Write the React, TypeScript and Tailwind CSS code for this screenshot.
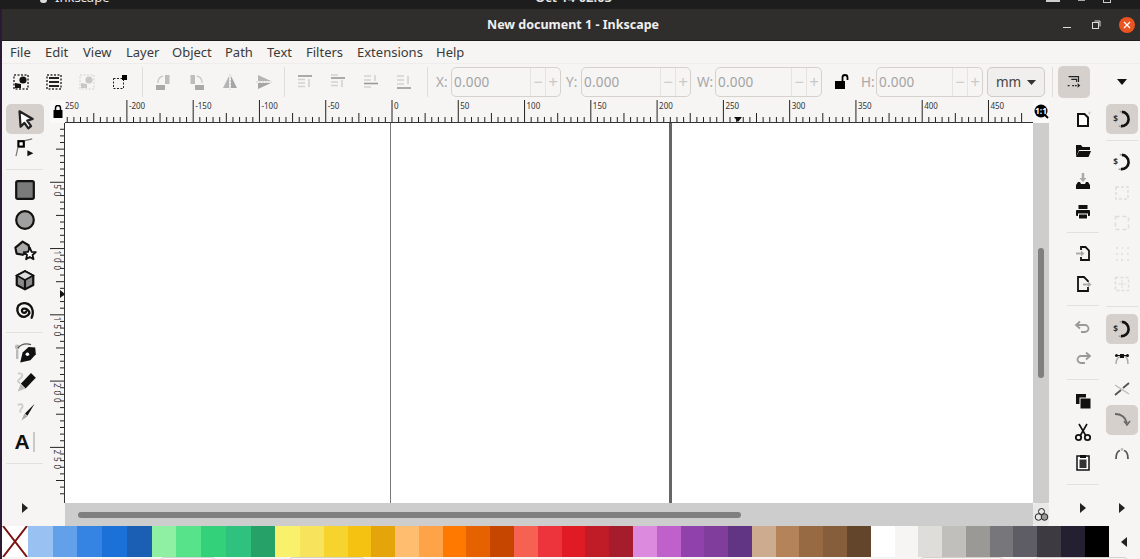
import React from "react";

type P = { children: React.ReactNode; s?: number; c?: string };
const Ic = ({ children, s = 20, c = "" }: P) => (
  <svg width={s} height={s} viewBox="0 0 20 20" className={c} fill="none">{children}</svg>
);
const D = "#111";

const Dash = ({ x = 3, y = 3, w = 14, h = 14, col = "#333" }: any) => (
  <rect x={x} y={y} width={w} height={h} stroke={col} strokeWidth="1.5" strokeDasharray="2 1.5" fill="none" />
);

const tbIcons: Record<string, React.ReactNode> = {
  all: (<><Dash /><circle cx="12" cy="8" r="3.6" fill={D} /><path d="M4 16v-5l6 1v4z" fill={D} /></>),
  layers: (<><Dash /><path d="M5 6h10M5 10h10M5 14h10" stroke="#222" strokeWidth="2.2" /></>),
  dsel: (<><Dash col="#ddd" /><circle cx="12" cy="8" r="3.6" fill="#c8c8c8" /><path d="M4 16v-5l6 1v4z" fill="#c8c8c8" /></>),
  touch: (<><rect x="3.5" y="6.5" width="10" height="10" stroke="#222" strokeDasharray="2 1.5" /><rect x="12" y="3" width="5" height="5" fill="#000" /></>),
  rotl: (<><rect x="3" y="13" width="9" height="5" fill="#a9a9a9" /><rect x="12" y="3" width="4.5" height="9" fill="#bdbdbd" /><path d="M10 4Q5 5 5 11" stroke="#ccc" strokeWidth="1.5" /></>),
  rotr: (<><rect x="8" y="13" width="9" height="5" fill="#a9a9a9" /><rect x="3.5" y="3" width="4.5" height="9" fill="#bdbdbd" /><path d="M10 4Q15 5 15 11" stroke="#ccc" strokeWidth="1.5" /></>),
  flipx: (<><path d="M9 4v12H3z" fill="#b5b5b5" /><path d="M11 4v12h6z" fill="#a5a5a5" /><path d="M10 2v16" stroke="#ccc" strokeDasharray="2 1" /></>),
  flipy: (<><path d="M4 9h13L4 3z" fill="#b5b5b5" /><path d="M4 11h13L4 17z" fill="#a5a5a5" /><path d="M2 10h16" stroke="#ccc" strokeDasharray="2 1" /></>),
  a1: (<><path d="M3 4h14" stroke="#999" strokeWidth="1.6" /><path d="M3 7.5h7M3 11h7M3 14.500h7M14 15V7" stroke="#d2d2d2" strokeWidth="1.6" /></>),
  a2: (<><path d="M3 6h14" stroke="#999" strokeWidth="1.6" /><path d="M3 3h7M3 10h7M3 13.500h7M14 15V8" stroke="#d2d2d2" strokeWidth="1.6" /></>),
  a3: (<><path d="M3 11.500h14" stroke="#999" strokeWidth="1.6" /><path d="M3 4h7M3 8h7M3 15h7M14 9V3" stroke="#d2d2d2" strokeWidth="1.6" /></>),
  a4: (<><path d="M3 16h14" stroke="#999" strokeWidth="1.6" /><path d="M3 4h7M3 8h7M3 12h7M14 12V4" stroke="#d2d2d2" strokeWidth="1.6" /></>),
};

const Sp = ({ x }: { x: string }) => <div className={`${x} h-[30px] w-px bg-[#e0dedb] shrink-0`} />;

const Tb = ({ k, w = "w-[33px]" }: { k: string; w?: string }) => (
  <div className={`${w} h-[36px] flex items-center justify-center shrink-0`}>
    <Ic>{tbIcons[k]}</Ic>
  </div>
);

const Spin = ({ w }: { w: string }) => (
  <div className={`${w} h-[30px] rounded-[5px] border border-[#d5d1cd] flex items-center shrink-0 text-[13.5px] text-[#a3a3a3]`}>
    <span className="pl-[2px] flex-1 tracking-[0.2px]">0.000</span>
    <span className="w-[15px] h-full border-l border-[#e6e4e1] flex items-center justify-center text-[#c9c9c9] text-[17px]">−</span>
    <span className="w-[15px] h-full border-l border-[#e6e4e1] flex items-center justify-center text-[#c9c9c9] text-[17px]">+</span>
  </div>
);

const Label = ({ t, w }: { t: string; w: string }) => (
  <span className={`${w} text-[13.5px] text-[#a8a8a8] shrink-0`}>{t}</span>
);

const HRuler = () => {
  const O = 327;
  const U = 1.3255;
  const els: React.ReactNode[] = [];
  for (let v = -250; v <= 475; v += 5) {
    const x = O + v * U;
    if (x < 0 || x > 969) continue;
    const h = v % 50 === 0 ? 22 : v % 25 === 0 ? 9 : 5;
    els.push(<line key={v} x1={x} x2={x} y1={22 - h} y2={22} stroke="#222" strokeWidth="1" />);
    if (v % 50 === 0) {
      els.push(<text key={"t" + v} x={x + 2} y={8.500} fontSize="8" fill="#333" fontFamily="'Noto Sans',sans-serif">{v}</text>);
    }
  }
  els.push(<text key="m250" x={0} y={8.500} fontSize="8" fill="#333" fontFamily="'Noto Sans',sans-serif">250</text>);
  return (
    <svg width="969" height="23" className="block flex-1 min-w-0">
      {els}
      <line x1="0" x2="969" y1="22.500" y2="22.500" stroke="#333" />
      <path d="M669 17h8l-4 5z" fill="#111" />
    </svg>
  );
};

const VRuler = () => {
  const O = -7;
  const U = 1.3255;
  const els: React.ReactNode[] = [];
  for (let v = -5; v <= 285; v += 5) {
    const y = O + v * U;
    if (y < 0 || y > 380) continue;
    const w = v % 50 === 0 ? 15 : v % 25 === 0 ? 9 : 5;
    els.push(<line key={v} y1={y} y2={y} x1={15 - w} x2={15} stroke="#222" />);
    if (v % 50 === 0 && v > 0) {
      String(v).split("").forEach((d, i) => {
        const ty = y + 2 + i * 7.5;
        els.push(
          <text key={`t${v}${i}`} x={0} y={0} transform={`translate(3.5 ${ty}) rotate(90)`} fontSize="8" fill="#333" fontFamily="'Noto Sans',sans-serif">{d}</text>
        );
      });
    }
  }
  return (
    <svg width="15" height="380" className="block shrink-0">
      {els}
      <line x1="14.500" x2="14.500" y1="0" y2="380" stroke="#333" />
      <path d="M10 167l5 4-5 4z" fill="#111" />
    </svg>
  );
};

const Tool = ({ children, on, h = "h-[30px]", w = "w-[38px]" }: { children: React.ReactNode; on?: boolean; h?: string; w?: string }) => (
  <div className={`${h} ${w} shrink-0 flex items-center justify-center rounded-[5px] ${on ? "bg-[#d5d0cc]" : ""}`}>{children}</div>
);

const Sep = ({ h, w = "w-[37px]" }: { h: string; w?: string }) => (
  <div className={`${h} flex items-center shrink-0`}><div className={`${w} h-px bg-[#e2e0dd]`} /></div>
);

const Tri = () => (
  <svg width="8" height="10" viewBox="0 0 8 10"><path d="M1 0l6 5-6 5z" fill="#222" /></svg>
);

const Snap = ({ muted }: { muted?: boolean }) => (
  <Ic s={22}>
    <path d="M10 3.500a6.500 6.500 0 1 1-1 13" stroke={muted ? "#bbb" : "#111"} strokeWidth="2.400" />
    <path d="M10 3.500h-2M9 16.500H7" stroke="#999" strokeWidth="1.400" />
    <text x="2" y="13" fontSize="7.500" fontWeight="700" fill="#333" fontFamily="'Noto Sans',sans-serif">$</text>
  </Ic>
);

const blues = ["#99c1f1", "#62a0ea", "#3584e4", "#1c71d8", "#1a5fb4", "#8ff0a4", "#57e389", "#33d17a", "#2ec27e", "#26a269", "#f9f06b"];
const rest = [
  "#f8e45c", "#f6d32d", "#f5c211", "#e5a50a",
  "#ffbe6f", "#ffa348", "#ff7800", "#e66100", "#c64600",
  "#f66151", "#ed333b", "#e01b24", "#c01c28", "#a51d2d",
  "#dc8add", "#c061cb", "#9141ac", "#813d9c", "#613583",
  "#cdab8f", "#b5835a", "#986a44", "#865e3c", "#63452c",
  "#ffffff", "#f6f5f4", "#deddda", "#c0bfbc", "#9a9996", "#77767b", "#5e5c64", "#3d3a42", "#241f31", "#000000",
];

const menus = [
  ["File", "w-[35px]"], ["Edit", "w-[38px]"], ["View", "w-[43px]"], ["Layer", "w-[46px]"], ["Object", "w-[53px]"],
  ["Path", "w-[42px]"], ["Text", "w-[39px]"], ["Filters", "w-[51px]"], ["Extensions", "w-[79px]"], ["Help", "w-[40px]"],
];

const Row = ({ children }: { children: React.ReactNode }) => (
  <div className="h-[30.500px] flex items-center justify-center shrink-0">{children}</div>
);

export default function App() {
  return (
    <div className="w-[1140px] h-[559px] overflow-hidden flex flex-col bg-[#1d1d1d] font-['Noto_Sans',sans-serif]">
      {/* top panel, cut by the screenshot */}
      <div className="h-[9px] shrink-0 flex items-start overflow-hidden bg-[#1d1d1d] text-[#e8e8e8] text-[13px] leading-[14px]">
        <div className="w-[40px] shrink-0" />
        <div className="w-[7px] h-[3px] bg-[#ddd] rounded-b-full shrink-0" />
        <span className="ml-[8px] -mt-[10px] w-[480px] shrink-0">Inkscape</span>
        <span className="-mt-[10px] w-[511px] shrink-0 font-semibold">Oct 14 02:03</span>
        <div className="w-[14px] h-[2px] bg-[#ccc] shrink-0" />
        <div className="w-[18px] shrink-0" />
        <div className="w-[7px] h-[1px] bg-[#aaa] shrink-0" />
        <div className="w-[18px] shrink-0" />
        <div className="w-[8px] h-[3px] border-b border-x border-[#ccc] shrink-0" />
      </div>

      <div className="flex-1 flex min-h-0">
        <div className="w-[2px] shrink-0 bg-[#2c1a35]" />
        <div className="flex-1 min-w-0 flex flex-col bg-[#f6f5f4]">
          {/* title bar */}
          <div className="h-[32px] shrink-0 bg-[#302d2d] flex items-center text-[#f0f0f0] border-b border-[#1f1d1d]">
            <div className="w-[1057px] pl-[85px] pt-[2px] flex justify-center text-[12.500px] font-bold">New document 1 - Inkscape</div>
            <div className="w-[16px] flex justify-center"><div className="w-[8px] h-[1.500px] mt-[6px] bg-[#ddd]" /></div>
            <div className="w-[13px]" />
            <div className="w-[16px] flex justify-center">
              <svg width="10" height="10" viewBox="0 0 10 10"><rect x="1.500" y="2.500" width="6" height="6" stroke="#ddd" fill="none" /><path d="M3.500 1h5.500v5.500" stroke="#ddd" fill="none" /></svg>
            </div>
            <div className="ml-[15px] w-[16px] h-[16px] rounded-full bg-[#e95420] flex items-center justify-center">
              <svg width="8" height="8" viewBox="0 0 8 8"><path d="M1 1l6 6M7 1L1 7" stroke="#fff" strokeWidth="1.300" /></svg>
            </div>
          </div>

          {/* menu */}
          <div className="h-[22px] shrink-0 flex items-center pl-[8px] pt-[2px] text-[13px] text-[#3a3a3a]">
            {menus.map(([t, w]) => (
              <span key={t} className={`${w} shrink-0`}>{t}</span>
            ))}
          </div>

          {/* commands */}
          <div className="h-[37px] shrink-0 flex items-center border-t border-[#eeedeb]">
            <div className="w-[2px] shrink-0" />
            <Tb k="all" /><Tb k="layers" /><Tb k="dsel" /><Tb k="touch" />
            <Sp x="ml-[6px]" />
            <div className="w-[2px] shrink-0" />
            <Tb k="rotl" w="w-[35px]" /><Tb k="rotr" w="w-[33px]" /><Tb k="flipx" w="w-[34px]" /><Tb k="flipy" w="w-[33px]" />
            <Sp x="ml-[4px]" />
            <div className="w-[3px] shrink-0" />
            <Tb k="a1" /><Tb k="a2" /><Tb k="a3" /><Tb k="a4" />
            <Sp x="ml-[7px]" />
            <div className="w-[8px] shrink-0" />
            <Label t="X:" w="w-[15px]" /><Spin w="w-[110px]" />
            <div className="w-[5px] shrink-0" />
            <Label t="Y:" w="w-[15px]" /><Spin w="w-[110px]" />
            <div className="w-[6px] shrink-0" />
            <Label t="W:" w="w-[18px]" /><Spin w="w-[107px]" />
            <div className="w-[11px] flex-none" />
            <svg width="18" height="18" viewBox="0 0 18 18" className="shrink-0">
              <rect x="2" y="8" width="10" height="8" fill="#000" />
              <path d="M9.500 8V4.500a2.500 2.500 0 0 1 5 0V7" stroke="#000" strokeWidth="1.800" fill="none" />
            </svg>
            <div className="w-[10px] shrink-0" />
            <Label t="H:" w="w-[15px]" /><Spin w="w-[107px]" />
            <div className="w-[4px] shrink-0" />
            <div className="w-[58px] h-[30px] shrink-0 rounded-[5px] border border-[#cfcbc7] bg-[#f1efed] flex items-center justify-center gap-[6px] text-[13.5px] text-[#444]">
              mm
              <svg width="9" height="5" viewBox="0 0 9 5"><path d="M0 0h9L4.500 5z" fill="#333" /></svg>
            </div>
            <Sp x="ml-[7px]" />
            <div className="w-[5px] shrink-0" />
            <div className="w-[32px] h-[32px] shrink-0 rounded-[5px] bg-[#d5d0cc] flex items-center justify-center">
              <Ic s={18}>
                <path d="M4 4h11v6M7 7h6v3" stroke="#222" strokeWidth="1.300" />
                <path d="M3 14h3M8 14h6" stroke="#222" strokeWidth="1.500" strokeDasharray="2 1" />
                <path d="M14 11.500l3 2.500-3 2.500z" fill="#222" />
              </Ic>
            </div>
            <div className="w-[27px] shrink-0" />
            <svg width="10" height="6" viewBox="0 0 10 6"><path d="M0 0h10L5 6z" fill="#111" /></svg>
          </div>

          {/* main */}
          <div className="flex-1 min-h-0 flex">
            {/* toolbox */}
            <div className="w-[48px] shrink-0 flex flex-col items-center pt-[4px] pl-[1px] pr-[4px]">
              <Tool on>
                <Ic s={22}><path d="M5 3l12 7-5 1.500 3.500 5-2.500 2-3.500-5L6 17z" fill="#fff" stroke="#222" strokeWidth="2" strokeLinejoin="round" /></Ic>
              </Tool>
              <Tool>
                <Ic s={24}>
                  <rect x="4.500" y="3.500" width="4.500" height="4.500" fill="#fff" stroke="#000" strokeWidth="1.800" />
                  <path d="M10 3l6-1.500M4 9L2.500 16" stroke="#777" strokeWidth="1" />
                  <path d="M12 11l5 2.500-5 2.500z" fill="#111" />
                </Ic>
              </Tool>
              <Sep h="h-[11px]" />
              <Tool><Ic s={22}><rect x="2" y="2" width="16" height="16" rx="1.500" fill="#7a7a7a" stroke="#111" strokeWidth="2" /></Ic></Tool>
              <Tool><Ic s={22}><circle cx="10" cy="10" r="8" fill="#a0a0a0" stroke="#111" strokeWidth="2" /></Ic></Tool>
              <Tool>
                <Ic s={24}>
                  <path d="M2 8l6-5 5 3 1 5-6 3-5-1z" fill="#aaa" stroke="#111" strokeWidth="1.800" strokeLinejoin="round" />
                  <path d="M14 8l1.500 3.500 3.500.3-2.700 2.400.8 3.500-3.100-1.900-3.100 1.900.8-3.500-2.700-2.400 3.500-.3z" fill="#fff" stroke="#111" strokeWidth="1.500" strokeLinejoin="round" />
                </Ic>
              </Tool>
              <Tool>
                <Ic s={22}>
                  <path d="M10 2l7.500 4v8.500L10 18.500 2.500 14.500V6z" fill="#8a8a8a" stroke="#111" strokeWidth="2" strokeLinejoin="round" />
                  <path d="M2.500 6L10 10l7.500-4L10 2z" fill="#ddd" stroke="#111" strokeWidth="1.500" />
                  <path d="M10 10v8" stroke="#111" strokeWidth="2" />
                </Ic>
              </Tool>
              <Tool>
                <Ic s={22}><path d="M11 11.500a2 2 0 1 1-3-2.500 4.500 4.500 0 0 1 6 4 5.500 5.500 0 0 1-8.500 2A7 7 0 0 1 4 6a7.500 7.500 0 0 1 12.500 3c1 2.500.8 5-.5 8" stroke="#111" strokeWidth="2.100" strokeLinecap="round" /></Ic>
              </Tool>
              <Sep h="h-[14px]" />
              <Tool h="h-[28px]">
                <Ic s={24}>
                  <circle cx="3.500" cy="5" r="2" fill="#bbb" /><path d="M3.500 7v8" stroke="#bbb" strokeWidth="2" />
                  <path d="M4 6Q8 1 15 3" stroke="#555" strokeWidth="1" />
                  <path d="M18.500 5.500L13 5 8 9.500 6 18l8.500-2 4.500-5z" fill="#111" />
                  <circle cx="12" cy="11" r="1.500" fill="#fff" />
                </Ic>
              </Tool>
              <Tool h="h-[29px]">
                <Ic s={24}>
                  <path d="M4 3c4-1 5 2 2 4s-2 3 0 4" stroke="#ccc" strokeWidth="1.500" />
                  <path d="M15 2.500l4 4L10.500 15.500l-4-4z" fill="#111" />
                  <path d="M6.500 11.500l4 4L4 18z" fill="#bbb" />
                </Ic>
              </Tool>
              <Tool>
                <Ic s={24}>
                  <path d="M4 5c4-2 5 1 3 3s-1 3 0 3" stroke="#ccc" strokeWidth="1.500" />
                  <path d="M18 4l-8 8 2 2z" fill="#111" />
                  <path d="M9.500 12l2.500 2.500-5 3.500z" fill="#aaa" />
                </Ic>
              </Tool>
              <div className="h-[31px] w-[38px] shrink-0 flex items-center justify-center gap-[3px] text-[21px] leading-none font-bold text-[#111] font-['Liberation_Sans',sans-serif]">
                A<div className="w-[2px] h-[20px] bg-[#c9c9c9]" />
              </div>
              <Sep h="h-[12px]" />
              <div className="mt-auto mb-[13px] h-[10px] flex items-center"><Tri /></div>
            </div>

            {/* centre */}
            <div className="w-[999px] shrink-0 flex flex-col min-h-0">
              <div className="h-[23px] shrink-0 flex overflow-hidden">
                <div className="w-[15px] h-[23px] shrink-0 rounded-[4px] bg-[#fafafa] flex items-center justify-center">
                  <svg width="10" height="13" viewBox="0 0 10 13"><rect x="0.500" y="5" width="9" height="8" fill="#000" /><path d="M2.500 5V3a2.500 2.500 0 0 1 5 0v2" stroke="#000" strokeWidth="1.500" fill="none" /></svg>
                </div>
                <div className="flex-1 min-w-0 overflow-hidden"><HRuler /></div>
                <div className="w-[16px] h-[23px] shrink-0 rounded-[4px] bg-[#fafafa] flex items-center justify-center">
                  <svg width="15" height="16" viewBox="0 0 15 16">
                    <circle cx="7" cy="7" r="6.500" fill="#000" />
                    <path d="M11 11l3 3" stroke="#000" strokeWidth="2" />
                    <text x="7" y="10" textAnchor="middle" fontSize="8.500" fontWeight="700" fill="#fff" fontFamily="'Noto Sans',sans-serif">1:1</text>
                  </svg>
                </div>
              </div>
              <div className="flex-1 min-h-0 flex">
                <VRuler />
                <div className="w-[968px] shrink-0 bg-white flex">
                  <div className="w-[326px] h-full border-r border-[#777]" />
                  <div className="w-[281px] h-full border-r-[3px] border-[#666]" />
                </div>
                <div className="flex-1 bg-[#cdcdcd] flex flex-col items-center pt-[125px]">
                  <div className="w-[6px] h-[130px] rounded-full bg-[#7f7f7f]" />
                </div>
              </div>
              <div className="h-[23px] shrink-0 flex">
                <div className="w-[15px] shrink-0" />
                <div className="w-[968px] shrink-0 bg-[#cdcdcd] flex items-center pl-[13px]">
                  <div className="w-[663px] h-[6px] rounded-full bg-[#7f7f7f]" />
                </div>
                <div className="flex-1 bg-[#e9e8e6] rounded-[4px] flex items-center justify-center">
                  <svg width="15" height="15" viewBox="0 0 15 15" fill="none" stroke="#222">
                    <circle cx="7.500" cy="4.500" r="3" /><circle cx="4.500" cy="10" r="3.300" /><circle cx="10.500" cy="10" r="3.300" fill="#999" />
                  </svg>
                </div>
              </div>
            </div>

            {/* commands bar */}
            <div className="w-[54px] shrink-0 flex flex-col items-center pt-[5px] pl-[14px]">
              <Row><Ic><path d="M5 4h6.500L15 7.500V16H5z" fill="#fff" stroke="#111" strokeWidth="2" /><path d="M16.500 1.500v3M15 3h3" stroke="#ccc" /></Ic></Row>
              <Row><Ic><path d="M3 4h5l1.500 2H17v3H6l-3 7z" fill="#111" /><path d="M6 10h12l-2.500 6H3z" fill="#111" /></Ic></Row>
              <Row><Ic><path d="M10 2v7" stroke="#aaa" strokeWidth="2.500" /><path d="M6.500 7l3.500 4 3.500-4z" fill="#aaa" /><path d="M5 11h2l1 2h4l1-2h2l2 3v4H3v-4z" fill="#111" /></Ic></Row>
              <Row><Ic><rect x="5.500" y="3" width="9" height="4" fill="#111" /><rect x="3" y="8" width="14" height="6" rx="1" fill="#111" /><rect x="5.500" y="12" width="9" height="5" fill="#111" stroke="#fff" strokeWidth="1" /></Ic></Row>
              <Sep h="h-[11px]" w="w-[32px]" />
              <Row><Ic><path d="M8 7V4h4.500L16 7.500V17H8v-3" stroke="#111" strokeWidth="1.800" /><path d="M3 10.500h6" stroke="#aaa" strokeWidth="2" /><path d="M8 7.500l3.500 3-3.500 3z" fill="#aaa" /></Ic></Row>
              <Row><Ic><path d="M15 8V7l-4-4H5v14h10v-4" stroke="#111" strokeWidth="1.800" /><path d="M10 10.500h6" stroke="#aaa" strokeWidth="2" /><path d="M15 7.500l3.500 3-3.500 3z" fill="#aaa" /></Ic></Row>
              <Sep h="h-[13px]" w="w-[32px]" />
              <Row><Ic><path d="M4 8h8a3.500 3.500 0 0 1 0 7H8" stroke="#999" strokeWidth="1.800" /><path d="M7 4.500L3 8l4 3.500" stroke="#999" strokeWidth="1.800" /></Ic></Row>
              <Row><Ic><path d="M16 8H8a3.500 3.500 0 0 0 0 7h4" stroke="#999" strokeWidth="1.800" /><path d="M13 4.500L17 8l-4 3.500" stroke="#999" strokeWidth="1.800" /></Ic></Row>
              <Sep h="h-[13px]" w="w-[32px]" />
              <Row><Ic><rect x="3" y="3" width="10" height="10" fill="#111" /><rect x="7" y="7" width="11" height="11" fill="#111" stroke="#f6f5f4" /></Ic></Row>
              <Row><Ic><path d="M6 2l7 12M14 2L7 14" stroke="#111" strokeWidth="1.600" /><circle cx="5.500" cy="15.500" r="2.700" stroke="#111" strokeWidth="1.800" /><circle cx="14.500" cy="15.500" r="2.700" stroke="#111" strokeWidth="1.800" /></Ic></Row>
              <Row><Ic><rect x="4" y="4" width="12" height="14" fill="#fff" stroke="#111" strokeWidth="1.500" /><rect x="7" y="3" width="6" height="3" fill="#111" /><rect x="6.500" y="7.500" width="7" height="8.500" fill="#333" /></Ic></Row>
              <Sep h="h-[13px]" w="w-[32px]" />
              <div className="mt-auto mb-[13px] h-[10px] flex items-center"><Tri /></div>
            </div>

            {/* snap bar */}
            <div className="flex-1 min-w-0 flex flex-col items-center pt-[4px]">
              <Tool on w="w-[32px]"><Snap /></Tool>
              <Sep h="h-[13px]" w="w-[32px]" />
              <Row><Snap /></Row>
              <Row><Ic><rect x="4" y="4" width="12" height="12" stroke="#ddd" strokeWidth="1.500" strokeDasharray="3 2" /></Ic></Row>
              <Row><Ic><rect x="3.500" y="3.500" width="13" height="13" stroke="#ddd" strokeWidth="1.500" strokeDasharray="4 3" /></Ic></Row>
              <Row><Ic><path d="M4 4h2M10 4h1M15 4h2M4 10h2M9 10h2M15 10h2M4 16h2M9 16h2M15 16h2" stroke="#ddd" strokeWidth="1.500" /></Ic></Row>
              <Row><Ic><rect x="3.500" y="3.500" width="13" height="13" stroke="#ddd" strokeWidth="1.500" strokeDasharray="3 2" /><path d="M10 6v8M6 10h8" stroke="#e6e6e6" strokeWidth="1.500" /></Ic></Row>
              <Sep h="h-[14px]" w="w-[32px]" />
              <Tool on w="w-[32px]"><Snap /></Tool>
              <Row><Ic><path d="M4 15Q4 8 10 7t6 8" stroke="#aaa" strokeWidth="1.400" /><rect x="8" y="5" width="4" height="4" fill="#111" /><circle cx="4.500" cy="6.500" r="1.500" fill="#111" /><circle cx="15.500" cy="6.500" r="1.500" fill="#111" /><path d="M5 6.500h10" stroke="#111" /></Ic></Row>
              <Row><Ic><path d="M3 16l6-5M11 9l6-5" stroke="#555" strokeWidth="1.800" /><path d="M3 6l14 9" stroke="#bbb" strokeWidth="1.400" /></Ic></Row>
              <Tool on w="w-[32px]">
                <Ic><path d="M3 4c6 0 10 2 12 9" stroke="#666" strokeWidth="1.800" /><path d="M12 11l3 4 3-4" stroke="#666" strokeWidth="1.500" /><circle cx="10" cy="14" r="1.500" fill="#ccc" /></Ic>
              </Tool>
              <div className="h-[34px] pt-[5px] flex items-center shrink-0">
                <Ic><path d="M4 15c0-5 2-8 4-8.500M12 6.500c2 .5 4 3.500 4 8.500" stroke="#555" strokeWidth="1.800" /><circle cx="10" cy="5.500" r="1.400" fill="#bbb" /></Ic>
              </div>
              <div className="mt-auto mb-[13px] h-[10px] flex items-center"><Tri /></div>
            </div>
          </div>

          {/* palette */}
          <div className="h-[31px] shrink-0 flex items-stretch">
            <div className="w-[26px] shrink-0 bg-white">
              <svg width="26" height="31" viewBox="0 0 26 31"><path d="M1 0l24 31M25 0L1 31" stroke="#7b120e" strokeWidth="2" /></svg>
            </div>
            <div className="w-[272px] shrink-0 flex">
              {blues.map((c) => <div key={c} className="flex-1" style={{ backgroundColor: c }} />)}
            </div>
            <div className="w-[808.500px] shrink-0 flex">
              {rest.map((c) => <div key={c} className="flex-1" style={{ backgroundColor: c }} />)}
            </div>
            <div className="flex-1 flex items-center justify-center">
              <svg width="8" height="10" viewBox="0 0 8 10"><path d="M7 0L1 5l6 5z" fill="#222" /></svg>
            </div>
          </div>

          {/* status bar, cut by the screenshot */}
          <div className="h-[2px] shrink-0 flex overflow-hidden">
            <div className="w-[158px] shrink-0" />
            <div className="w-[56px] h-[10px] shrink-0 rounded border border-[#d5d1cd]" />
            <div className="w-[73px] shrink-0" />
            <div className="w-[76px] h-[10px] shrink-0 rounded border border-[#d5d1cd]" />
            <div className="w-[555px] shrink-0" />
            <div className="w-[84px] h-[10px] shrink-0 rounded border border-[#d5d1cd]" />
            <div className="w-[31px] shrink-0" />
            <div className="w-[93px] h-[10px] shrink-0 rounded border border-[#d5d1cd]" />
          </div>
        </div>
      </div>
    </div>
  );
}
